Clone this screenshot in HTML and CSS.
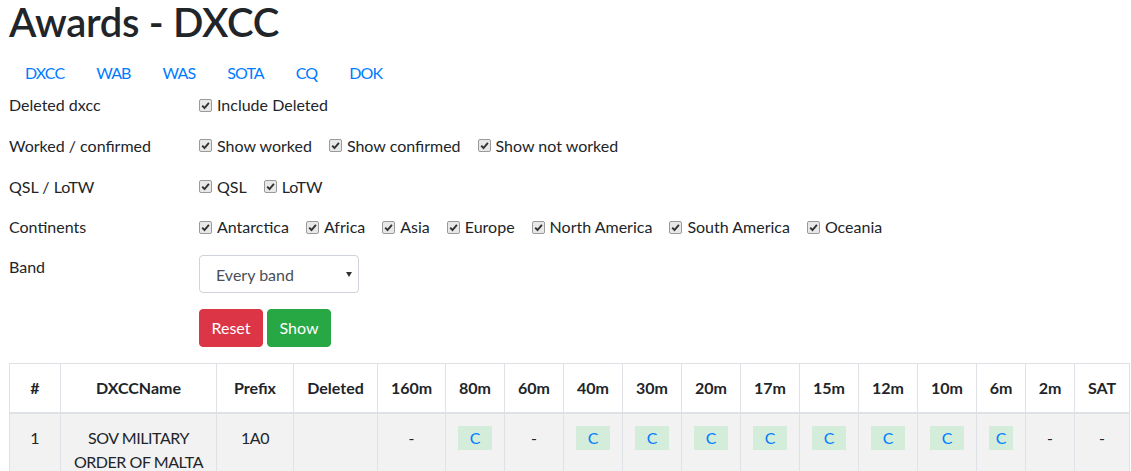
FILE: index.html
```html
<!DOCTYPE html>
<html lang="en">
<head>
<meta charset="utf-8">
<title>Awards - DXCC</title>
<link rel="stylesheet" href="styles.css">
</head>
<body>
<div class="page">
  <h1 class="title">Awards - DXCC</h1>
  <nav class="nav">
    <a class="nav-link" href="#">DXCC</a>
    <a class="nav-link" href="#">WAB</a>
    <a class="nav-link" href="#">WAS</a>
    <a class="nav-link" href="#">SOTA</a>
    <a class="nav-link" href="#">CQ</a>
    <a class="nav-link" href="#">DOK</a>
  </nav>

  <form class="filters">
    <div class="form-row">
      <div class="form-label">Deleted dxcc</div>
      <div class="checks">
        <label class="check"><input type="checkbox" checked> Include Deleted</label>
      </div>
    </div>
    <div class="form-row">
      <div class="form-label">Worked / confirmed</div>
      <div class="checks">
        <label class="check"><input type="checkbox" checked> Show worked</label>
        <label class="check"><input type="checkbox" checked> Show confirmed</label>
        <label class="check"><input type="checkbox" checked> Show not worked</label>
      </div>
    </div>
    <div class="form-row">
      <div class="form-label">QSL / LoTW</div>
      <div class="checks">
        <label class="check"><input type="checkbox" checked> QSL</label>
        <label class="check"><input type="checkbox" checked> LoTW</label>
      </div>
    </div>
    <div class="form-row">
      <div class="form-label">Continents</div>
      <div class="checks">
        <label class="check"><input type="checkbox" checked> Antarctica</label>
        <label class="check"><input type="checkbox" checked> Africa</label>
        <label class="check"><input type="checkbox" checked> Asia</label>
        <label class="check"><input type="checkbox" checked> Europe</label>
        <label class="check"><input type="checkbox" checked> North America</label>
        <label class="check"><input type="checkbox" checked> South America</label>
        <label class="check"><input type="checkbox" checked> Oceania</label>
      </div>
    </div>
    <div class="form-row form-row-band">
      <div class="form-label">Band</div>
      <div class="select-wrap">
        <select class="select">
          <option>Every band</option>
        </select>
      </div>
    </div>
    <div class="form-row form-row-buttons">
      <div class="form-label"></div>
      <div class="buttons">
        <button type="reset" class="btn btn-danger">Reset</button>
        <button type="button" class="btn btn-success">Show</button>
      </div>
    </div>
  </form>

  <table class="table">
    <colgroup>
      <col class="w51"><col class="w156"><col class="w77"><col class="w84"><col class="w68">
      <col class="w59"><col class="w59"><col class="w59"><col class="w59"><col class="w59">
      <col class="w59"><col class="w59"><col class="w59"><col class="w59">
      <col class="w49"><col class="w49"><col class="w55">
    </colgroup>
    <thead>
      <tr>
        <th>#</th><th>DXCCName</th><th>Prefix</th><th>Deleted</th><th>160m</th>
        <th>80m</th><th>60m</th><th>40m</th><th>30m</th><th>20m</th><th>17m</th>
        <th>15m</th><th>12m</th><th>10m</th><th>6m</th><th>2m</th><th>SAT</th>
      </tr>
    </thead>
    <tbody>
      <tr>
        <td>1</td>
        <td class="caps">SOV MILITARY ORDER OF MALTA</td>
        <td class="caps">1A0</td>
        <td></td>
        <td>-</td>
        <td><div class="conf"><a href="#">C</a></div></td>
        <td>-</td>
        <td><div class="conf"><a href="#">C</a></div></td>
        <td><div class="conf"><a href="#">C</a></div></td>
        <td><div class="conf"><a href="#">C</a></div></td>
        <td><div class="conf"><a href="#">C</a></div></td>
        <td><div class="conf"><a href="#">C</a></div></td>
        <td><div class="conf"><a href="#">C</a></div></td>
        <td><div class="conf"><a href="#">C</a></div></td>
        <td><div class="conf"><a href="#">C</a></div></td>
        <td>-</td>
        <td>-</td>
      </tr>
    </tbody>
  </table>
</div>
</body>
</html>
```

FILE: styles.css
```css
html, body {
  margin: 0;
  padding: 0;
  background: #fff;
}

body {
  font-family: Lato, "Open Sans", "Noto Sans", sans-serif;
  font-size: 16px;
  line-height: 24px;
  color: #212529;
}

.page {
  padding: 0 2px 0 9px;
}

.title {
  margin: 0 0 8px;
  font-size: 40px;
  line-height: 45px;
  font-weight: 600;
  letter-spacing: -0.3px;
  color: #212529;
}

.nav {
  display: flex;
  height: 40px;
  align-items: center;
}

.nav-link {
  padding: 8px 16px;
  color: #007bff;
  text-decoration: none;
  letter-spacing: -0.9px;
}

.filters {
  margin: 0;
}

.form-row {
  display: grid;
  grid-template-columns: 190px 1fr;
  margin-bottom: 16.75px;
  align-items: start;
}

.form-row-band {
  margin-top: -1px;
  margin-bottom: 16px;
}

.form-row-buttons {
  margin-bottom: 16px;
}

.form-label {
  line-height: 24px;
}

.checks {
  display: flex;
  flex-wrap: wrap;
  gap: 17px;
}

.check {
  display: inline-flex;
  align-items: center;
  gap: 5px;
  line-height: 24px;
}

.check input {
  -webkit-appearance: none;
  appearance: none;
  margin: 0;
  width: 13px;
  height: 13px;
  border: 1px solid #9a9a9a;
  border-radius: 2px;
  background-color: #e8e8e8;
  background-image: url("data:image/svg+xml;utf8,<svg xmlns='http://www.w3.org/2000/svg' viewBox='0 0 11 11'><path d='M2.2 5.6l2.3 2.4 4.4-5.2' fill='none' stroke='%23333' stroke-width='1.9'/></svg>");
  background-repeat: no-repeat;
  background-position: center;
  background-size: 11px 11px;
}

.select-wrap {
  position: relative;
  width: 160px;
  height: 38px;
}

.select-wrap::after {
  content: "";
  position: absolute;
  right: 7px;
  top: 17px;
  width: 0;
  height: 0;
  border-left: 3.5px solid transparent;
  border-right: 3.5px solid transparent;
  border-top: 5px solid #333;
  pointer-events: none;
}

.select {
  -webkit-appearance: none;
  appearance: none;
  box-sizing: border-box;
  width: 160px;
  height: 38px;
  margin: 0;
  padding: 7px 24px 5px 16px;
  border: 1px solid #ced4da;
  border-radius: 4px;
  background: #fff;
  font-family: inherit;
  font-size: 16px;
  line-height: 24px;
  color: #495057;
}

.buttons {
  display: flex;
  gap: 4px;
}

.btn {
  box-sizing: border-box;
  width: 64px;
  height: 38px;
  padding: 6px 0;
  border: 1px solid transparent;
  border-radius: 4px;
  font-family: inherit;
  font-size: 16px;
  line-height: 24px;
  color: #fff;
  text-align: center;
}

.btn-danger {
  background: #dc3545;
  border-color: #dc3545;
}

.btn-success {
  background: #28a745;
  border-color: #28a745;
}

.table {
  width: 1120px;
  border-collapse: collapse;
  table-layout: fixed;
  color: #212529;
}

.table th,
.table td {
  padding: 12px;
  border: 1px solid #dee2e6;
  text-align: center;
  vertical-align: top;
  line-height: 24px;
}

.table thead th {
  font-weight: 700;
  vertical-align: bottom;
  border-bottom: 2px solid #dee2e6;
}

.table tbody tr {
  background: #f2f2f2;
}

.table td.caps {
  letter-spacing: -0.45px;
}

.conf {
  background: #d4edda;
  height: 24px;
  line-height: 24px;
}

.conf a {
  color: #007bff;
  text-decoration: none;
}

.w51 { width: 51px; }
.w156 { width: 156px; }
.w77 { width: 77px; }
.w84 { width: 84px; }
.w68 { width: 68px; }
.w59 { width: 59px; }
.w49 { width: 49px; }
.w55 { width: 55px; }
```
